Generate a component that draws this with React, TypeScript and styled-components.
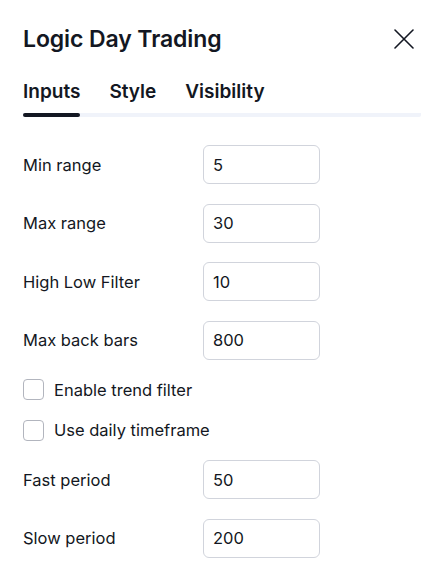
import React, { useState } from 'react';
import styled, { createGlobalStyle } from 'styled-components';

const GlobalStyle = createGlobalStyle`
  body {
    margin: 0;
    background: #ffffff;
    font-family: Inter, "Noto Sans", sans-serif;
    color: #131722;
  }
`;

const Dialog = styled.div`
  width: 445px;
  min-height: 571px;
  box-sizing: border-box;
  padding: 25px 24px 0 23px;
  background: #fff;
`;

const Header = styled.div`
  display: flex;
  align-items: center;
  justify-content: space-between;
  height: 28px;
`;

const Title = styled.h1`
  margin: 0;
  font-size: 23px;
  font-weight: 600;
  letter-spacing: -0.1px;
  color: #131722;
`;

const CloseButton = styled.button`
  border: none;
  background: none;
  padding: 0;
  margin-right: 7px;
  width: 20px;
  height: 20px;
  display: flex;
  align-items: center;
  justify-content: center;
  cursor: pointer;
  color: #131722;
`;

const Tabs = styled.div`
  display: flex;
  gap: 29px;
  margin-top: 27px;
  border-bottom: 4px solid #f0f3fa;
  border-radius: 2px;
`;

const Tab = styled.button<{ active?: boolean }>`
  position: relative;
  border: none;
  background: none;
  padding: 0 0 10px;
  font-family: inherit;
  font-size: 19px;
  font-weight: 600;
  color: #131722;
  cursor: pointer;

  &::after {
    content: '';
    position: absolute;
    left: 0;
    right: 0;
    bottom: -4px;
    height: 4px;
    border-radius: 2px;
    background: ${(p) => (p.active ? '#131722' : 'transparent')};
  }
`;

const Form = styled.div`
  display: flex;
  flex-direction: column;
  gap: 19.5px;
  margin-top: 28px;
`;

const FieldRow = styled.div`
  display: grid;
  grid-template-columns: 180px 117px;
  align-items: center;
`;

const Label = styled.label`
  font-size: 16.5px;
  color: #131722;
`;

const Input = styled.input`
  box-sizing: border-box;
  width: 117px;
  height: 39px;
  border: 1px solid #d1d4dc;
  border-radius: 6px;
  padding: 0 9px;
  font-family: inherit;
  font-size: 16.5px;
  color: #131722;
  outline: none;
`;

const CheckRow = styled.label`
  display: flex;
  align-items: center;
  gap: 10px;
  height: 21px;
  font-size: 16.5px;
  color: #131722;
  cursor: pointer;
`;

const Box = styled.span<{ checked: boolean }>`
  box-sizing: border-box;
  width: 21px;
  height: 21px;
  border: 1px solid #b2b5be;
  border-radius: 4px;
  background: ${(p) => (p.checked ? '#131722' : '#fff')};
`;

const fieldsTop = [
  { label: 'Min range', value: '5' },
  { label: 'Max range', value: '30' },
  { label: 'High Low Filter', value: '10' },
  { label: 'Max back bars', value: '800' },
];

const fieldsBottom = [
  { label: 'Fast period', value: '50' },
  { label: 'Slow period', value: '200' },
];

const Field = ({ label, value }: { label: string; value: string }) => (
  <FieldRow>
    <Label>{label}</Label>
    <Input defaultValue={value} />
  </FieldRow>
);

export default function App() {
  const [tab, setTab] = useState('Inputs');
  const [trend, setTrend] = useState(false);
  const [daily, setDaily] = useState(false);

  return (
    <>
      <GlobalStyle />
      <Dialog>
        <Header>
          <Title>Logic Day Trading</Title>
          <CloseButton aria-label="Close">
            <svg width="20" height="20" viewBox="0 0 20 20" fill="none">
              <path d="M1 1L19 19M19 1L1 19" stroke="currentColor" strokeWidth="1.6" strokeLinecap="round" />
            </svg>
          </CloseButton>
        </Header>
        <Tabs>
          {['Inputs', 'Style', 'Visibility'].map((t) => (
            <Tab key={t} active={tab === t} onClick={() => setTab(t)}>
              {t}
            </Tab>
          ))}
        </Tabs>
        <Form>
          {fieldsTop.map((f) => (
            <Field key={f.label} {...f} />
          ))}
          <CheckRow onClick={() => setTrend(!trend)}>
            <Box checked={trend} />
            Enable trend filter
          </CheckRow>
          <CheckRow onClick={() => setDaily(!daily)}>
            <Box checked={daily} />
            Use daily timeframe
          </CheckRow>
          {fieldsBottom.map((f) => (
            <Field key={f.label} {...f} />
          ))}
        </Form>
      </Dialog>
    </>
  );
}
